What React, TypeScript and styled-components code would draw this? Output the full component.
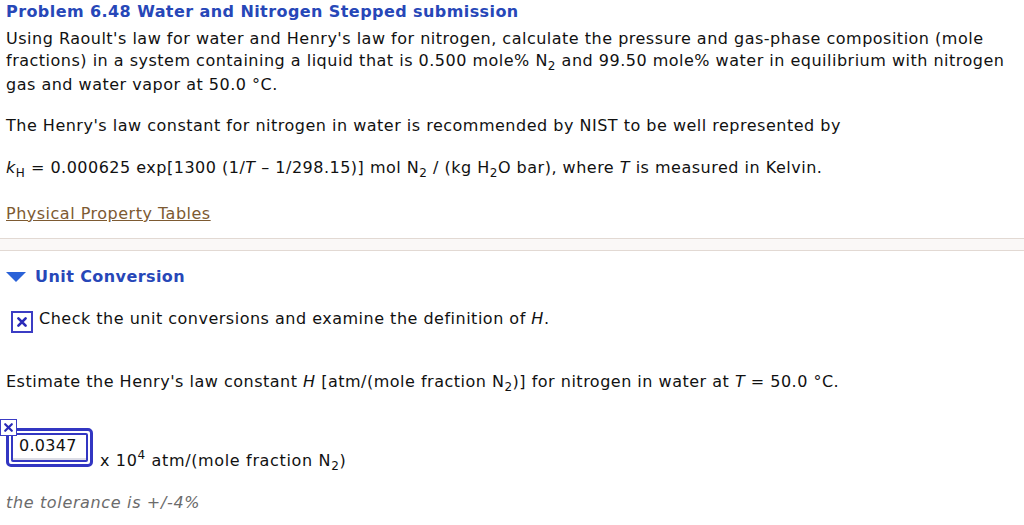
import React from 'react';
import styled, { createGlobalStyle } from 'styled-components';

const GlobalStyle = createGlobalStyle`
  html, body {
    margin: 0;
    padding: 0;
    background: #fff;
  }
  body {
    font-family: "DejaVu Sans", Verdana, sans-serif;
    font-size: 16px;
    letter-spacing: 0.5px;
    color: #111;
  }
`;

const Page = styled.div`
  width: 1024px;
  padding-top: 2px;
`;

const Section = styled.div`
  padding: 0 6px;
`;

const Title = styled.h1`
  margin: 0;
  font-size: 16px;
  font-weight: bold;
  letter-spacing: 0.42px;
  color: #2747b8;
  line-height: 20px;
`;

const Para = styled.p<{ $mt?: number }>`
  margin: ${(p) => p.$mt ?? 0}px 0 0;
  line-height: 22px;
  white-space: nowrap;
`;

const LastLine = styled.span`
  display: inline-block;
  margin-top: 2px;
`;

const Link = styled.a`
  color: #7d5a32;
  text-decoration: underline;
  cursor: pointer;
`;

const Divider = styled.div`
  margin-top: 13px;
  height: 11px;
  background: #faf8f7;
  border-top: 1px solid #e2d9d3;
  border-bottom: 1px solid #e2d9d3;
`;

const StepHeader = styled.div`
  display: flex;
  align-items: center;
  gap: 9px;
  margin-top: 15px;
  padding-left: 6px;
  font-weight: bold;
  letter-spacing: 0.42px;
  color: #2747b8;
  line-height: 22px;
`;

const CheckRow = styled.div`
  display: flex;
  align-items: flex-start;
  gap: 6px;
  margin-top: 20px;
  padding-left: 11px;
  line-height: 22px;
`;

const CheckBox = styled.span`
  display: inline-flex;
  align-items: center;
  justify-content: center;
  width: 18px;
  height: 18px;
  margin-top: 3px;
  border: 2px solid #3b3cc4;
  color: #2f2fc0;
`;

const AnswerRow = styled.div`
  position: relative;
  display: flex;
  align-items: flex-end;
  gap: 7px;
  margin-top: 26px;
  padding: 9px 0 0 6px;
`;

const ErrorMark = styled.span`
  position: absolute;
  left: 0;
  top: 0;
  width: 15px;
  height: 15px;
  border: 1px solid #3b3cc4;
  background: #fff;
  display: flex;
  align-items: center;
  justify-content: center;
`;

const InputFrame = styled.div`
  border: 3px solid #3236c2;
  border-radius: 5px;
  padding: 2px;
`;

const InputInner = styled.div`
  border: 2px solid #3236c2;
  border-radius: 2px;
  width: 67px;
  height: 25px;
  background: #fff;
  box-shadow: inset 0 -2px 0 #dcdde6;
  padding: 0 0 0 6px;
  line-height: 22px;
  letter-spacing: 0.3px;
`;

const Units = styled.span`
  line-height: 22px;
  margin-bottom: -5px;
  letter-spacing: 0.65px;
  white-space: nowrap;
`;

const Tolerance = styled.p`
  margin: 25px 0 0;
  font-style: italic;
  letter-spacing: 0.65px;
  color: #6b6b6b;
  line-height: 22px;
`;

const Sub = styled.sub`
  font-size: 12px;
  vertical-align: -4px;
  line-height: 0;
`;

const Sup = styled.sup`
  font-size: 12px;
  vertical-align: 7px;
  line-height: 0;
`;

const Triangle = () => (
  <svg width="20" height="10" viewBox="0 0 20 10">
    <polygon points="0,0 20,0 10,10" fill="#2a62d8" />
  </svg>
);

const Cross = ({ size, stroke }: { size: number; stroke: number }) => (
  <svg width={size} height={size} viewBox="0 0 10 10">
    <path d="M2 2 L8 8 M8 2 L2 8" stroke="#2a2ab8" strokeWidth={stroke} strokeLinecap="round" />
  </svg>
);

export default function App() {
  return (
    <Page>
      <GlobalStyle />
      <Section>
        <Title>Problem 6.48 Water and Nitrogen Stepped submission</Title>
        <Para $mt={6}>
          Using Raoult's law for water and Henry's law for nitrogen, calculate the pressure and gas-phase composition (mole
          <br />
          fractions) in a system containing a liquid that is 0.500 mole% N<Sub>2</Sub> and 99.50 mole% water in equilibrium with nitrogen
          <br />
          <LastLine>gas and water vapor at 50.0 °C.</LastLine>
        </Para>
        <Para $mt={19}>
          The Henry's law constant for nitrogen in water is recommended by NIST to be well represented by
        </Para>
        <Para $mt={20}>
          <i>k</i><Sub>H</Sub> = 0.000625 exp[1300 (1/<i>T</i> – 1/298.15)] mol N<Sub>2</Sub> / (kg H<Sub>2</Sub>O bar), where <i>T</i> is measured in Kelvin.
        </Para>
        <Para $mt={24}>
          <Link>Physical Property Tables</Link>
        </Para>
      </Section>
      <Divider />
      <StepHeader>
        <Triangle />
        Unit Conversion
      </StepHeader>
      <CheckRow>
        <CheckBox>
          <Cross size={12} stroke={2.2} />
        </CheckBox>
        <span>
          Check the unit conversions and examine the definition of <i>H</i>.
        </span>
      </CheckRow>
      <Section>
        <Para $mt={38}>
          Estimate the Henry's law constant <i>H</i> [atm/(mole fraction N<Sub>2</Sub>)] for nitrogen in water at <i>T</i> = 50.0 °C.
        </Para>
      </Section>
      <AnswerRow>
        <ErrorMark>
          <Cross size={11} stroke={2} />
        </ErrorMark>
        <InputFrame>
          <InputInner>0.0347</InputInner>
        </InputFrame>
        <Units>
          x 10<Sup>4</Sup> atm/(mole fraction N<Sub>2</Sub>)
        </Units>
      </AnswerRow>
      <Section>
        <Tolerance>the tolerance is +/-4%</Tolerance>
      </Section>
    </Page>
  );
}
